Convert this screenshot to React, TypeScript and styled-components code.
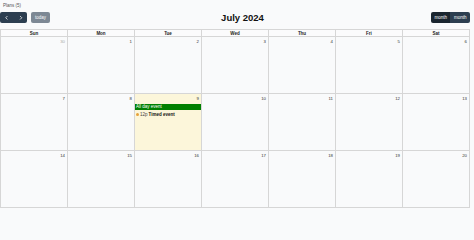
import React from "react";
import styled, { createGlobalStyle } from "styled-components";

const GlobalStyle = createGlobalStyle`
  html, body {
    margin: 0;
    padding: 0;
    background: #f9fafb;
    font-family: "Liberation Sans", Arial, sans-serif;
  }
`;

const Page = styled.div`
  width: 470px;
  padding-top: 2px;
`;

const Caption = styled.div`
  font-size: 4.5px;
  color: #555;
  margin-left: 3px;
  height: 7px;
  line-height: 7px;
`;

const Toolbar = styled.div`
  display: flex;
  align-items: center;
  justify-content: space-between;
  margin-top: 3px;
  height: 11px;
`;

const Group = styled.div`
  display: flex;
  align-items: center;
  gap: 4px;
`;

const ButtonGroup = styled.div`
  display: flex;

  button:first-child {
    border-radius: 2px 0 0 2px;
  }

  button:last-child {
    border-radius: 0 2px 2px 0;
  }
`;

const Button = styled.button<{ $active?: boolean; $disabled?: boolean; $wide?: boolean }>`
  all: unset;
  box-sizing: border-box;
  height: 11px;
  padding: 0 ${({ $wide }) => ($wide ? "4px" : "3.5px")};
  display: flex;
  align-items: center;
  justify-content: center;
  font-size: 4.5px;
  color: #fff;
  background: ${({ $active }) => ($active ? "#1a252f" : "#2c3e50")};
  opacity: ${({ $disabled }) => ($disabled ? 0.6 : 1)};
  border-radius: 2px;

  svg {
    width: 5.5px;
    height: 5.5px;
  }
`;

const Title = styled.h2`
  margin: 0;
  font-size: 9.5px;
  font-weight: 700;
  color: #111;
  position: relative;
  left: 2px;
`;

const Table = styled.div`
  margin-top: 6px;
  border-top: 1px solid #d6d6d6;
  border-left: 1px solid #d6d6d6;
  display: grid;
  grid-template-columns: repeat(7, 1fr);
  grid-template-rows: 7px repeat(3, 57px);
`;

const Head = styled.div`
  border-right: 1px solid #d6d6d6;
  border-bottom: 1px solid #d6d6d6;
  font-size: 4.5px;
  font-weight: 700;
  text-align: center;
  line-height: 7px;
  color: #222;
  background: #fbfbfc;
`;

const Cell = styled.div<{ $today?: boolean }>`
  border-right: 1px solid #d6d6d6;
  border-bottom: 1px solid #d6d6d6;
  background: ${({ $today }) => ($today ? "#fcf6da" : "#f9fafb")};
  display: flex;
  flex-direction: column;
  min-width: 0;
`;

const DayNumber = styled.div<{ $other?: boolean }>`
  font-size: 4.3px;
  text-align: right;
  padding: 2px 2px 0 0;
  height: 7px;
  color: ${({ $other }) => ($other ? "#aaa" : "#333")};
`;

const AllDayEvent = styled.div`
  margin-top: 1px;
  background: #008000;
  color: #fff;
  font-size: 4.5px;
  line-height: 6px;
  padding-left: 1px;
`;

const TimedEvent = styled.div`
  display: flex;
  align-items: center;
  gap: 1px;
  font-size: 4.5px;
  margin-top: 2px;
  padding-left: 1px;
  color: #444;

  i {
    width: 3px;
    height: 3px;
    border-radius: 50%;
    background: #e6a23c;
  }

  b {
    font-weight: 700;
    color: #111;
  }
`;

const days = ["Sun", "Mon", "Tue", "Wed", "Thu", "Fri", "Sat"];

const weeks = [
  [30, 1, 2, 3, 4, 5, 6],
  [7, 8, 9, 10, 11, 12, 13],
  [14, 15, 16, 17, 18, 19, 20],
];

const Chevron = ({ dir }: { dir: "left" | "right" }) => (
  <svg viewBox="0 0 16 16" fill="none" stroke="currentColor" strokeWidth="2.2">
    {dir == "left" ? <path d="M10 3 5 8l5 5" /> : <path d="m6 3 5 5-5 5" />}
  </svg>
);

function App() {
  return (
    <>
      <GlobalStyle />
      <Page>
        <Caption>Plans (5)</Caption>
        <Toolbar>
          <Group>
            <ButtonGroup>
              <Button $wide>
                <Chevron dir="left" />
              </Button>
              <Button $wide>
                <Chevron dir="right" />
              </Button>
            </ButtonGroup>
            <Button $disabled $wide>today</Button>
          </Group>
          <Title>July 2024</Title>
          <ButtonGroup>
            <Button $active>month</Button>
            <Button>month</Button>
          </ButtonGroup>
        </Toolbar>
        <Table>
          {days.map((d) => (
            <Head key={d}>{d}</Head>
          ))}
          {weeks.map((week, w) =>
            week.map((n, i) => {
              const today = w == 1 && n == 9;
              return (
                <Cell key={`${w}-${i}`} $today={today}>
                  <DayNumber $other={w == 0 && n == 30}>{n}</DayNumber>
                  {today && (
                    <>
                      <AllDayEvent>All day event</AllDayEvent>
                      <TimedEvent>
                        <i />
                        <span>12p</span>
                        <b>Timed event</b>
                      </TimedEvent>
                    </>
                  )}
                </Cell>
              );
            })
          )}
        </Table>
      </Page>
    </>
  );
}

export default App;
